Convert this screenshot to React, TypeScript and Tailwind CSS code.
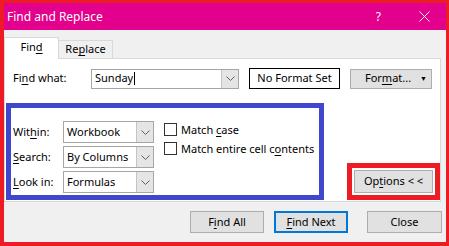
import React from "react";

function Chevron() {
  return (
    <svg width="9" height="5" viewBox="0 0 9 5" className="block">
      <path d="M0.5 0.5 L4.5 4.5 L8.5 0.5" fill="none" stroke="#606060" strokeWidth="1" />
    </svg>
  );
}

function Combo({ value, width, caret }: { value: string; width: string; caret?: boolean }) {
  return (
    <div className={`flex h-full ${width} border border-[#a6a6a6] bg-white`}>
      <div className="flex flex-1 items-center pl-[3px]">
        {value}
        {caret && <span className="ml-px h-[13px] w-px bg-black" />}
      </div>
      <div className="flex w-[17px] items-center justify-center border-l border-[#c4c4c4] bg-[#e5e5e5]">
        <Chevron />
      </div>
    </div>
  );
}

function Check({ children }: { children: React.ReactNode }) {
  return (
    <div className="flex h-[13px] items-center">
      <div className="h-[13px] w-[13px] shrink-0 border border-[#333] bg-white" />
      <span className="ml-[4px] leading-none whitespace-nowrap">{children}</span>
    </div>
  );
}

export default function App() {
  return (
    <div
      className="flex h-[246px] w-[449px] flex-col border-t-[3px] border-r-[3px] border-b-4 border-l-4 border-[#ed1c24] bg-[#f0f0f0] text-[11px] text-black"
      style={{ fontFamily: '"Noto Sans", "Open Sans", sans-serif' }}
    >
      {/* title bar */}
      <div className="flex h-[27px] shrink-0 items-center bg-[#e3008c] pl-[3px] text-white">
        <span className="text-[12px]">Find and Replace</span>
        <span className="ml-auto text-[12px]">?</span>
        <svg width="11" height="11" viewBox="0 0 11 11" className="mr-[16px] ml-[38px]">
          <path d="M0.5 0.5 L10.5 10.5 M10.5 0.5 L0.5 10.5" stroke="white" strokeWidth="1" />
        </svg>
      </div>

      {/* tabs */}
      <div className="mt-[7px] flex h-[21px] items-end">
        <div className="relative z-10 -mb-px flex h-[22px] w-[55px] items-center justify-center border border-b-0 border-[#d9d9d9] bg-white pb-[2px]">
          Fin<u className="underline-offset-2">d</u>
        </div>
        <div className="flex h-[18px] w-[54px] items-center justify-center border-t border-r border-[#d9d9d9] bg-[#f0f0f0]">
          Re<u className="underline-offset-2">p</u>lace
        </div>
      </div>

      {/* panel */}
      <div className="flex h-[144px] w-[437px] flex-col border border-[#d9d9d9] bg-white">
        <div className="mt-[9px] flex h-[21px] items-center pl-[8px]">
          <div className="w-[78px]">
            Fi<u className="underline-offset-2">n</u>d what:
          </div>
          <div className="h-[20px]">
            <Combo value="Sunday" width="w-[148px]" caret />
          </div>
          <div className="ml-[10px] flex h-[21px] w-[91px] items-center justify-center border border-black bg-white">
            No Format Set
          </div>
          <div className="ml-[10px] flex h-[20px] w-[82px] items-center border border-[#adadad] bg-[#e1e1e1]">
            <span className="flex-1 pl-[5px] text-center">
              For<u className="underline-offset-2">m</u>at...
            </span>
            <span className="mr-[4px] text-[7px] leading-none">▼</span>
          </div>
        </div>

        <div className="mt-[14px] flex items-end">
          <div className="ml-px flex h-[97px] w-[318px] border-[5px] border-[#3f48cc] pt-[13px] pl-[2px]">
            <div className="flex flex-col gap-[3px]">
              {[
                ["Wit", "h", "in:", "Workbook"],
                ["", "S", "earch:", "By Columns"],
                ["", "L", "ook in:", "Formulas"],
              ].map(([a, u, b, v]) => (
                <div key={v} className="flex h-[22px] items-center">
                  <div className="w-[50px]">
                    {a}
                    <u className="underline-offset-2">{u}</u>
                    {b}
                  </div>
                  <Combo value={v} width="w-[91px]" />
                </div>
              ))}
            </div>
            <div className="ml-[10px] flex flex-col gap-[6px] pt-[2px]">
              <Check>
                Match <u className="underline-offset-2">c</u>ase
              </Check>
              <Check>
                Match entire cell c<u className="underline-offset-2">o</u>ntents
              </Check>
            </div>
          </div>
          <div className="ml-[23px] h-[37px] w-[93px] border-[5px] border-[#ed1c24] bg-white p-[2px]">
            <div className="flex h-full w-full items-center justify-center border border-[#adadad] bg-[#e1e1e1]">
              Op<u className="underline-offset-2">t</u>ions &lt; &lt;
            </div>
          </div>
        </div>
      </div>

      {/* buttons */}
      <div className="mt-[9px] flex justify-end pr-[4px]">
        <div className="flex h-[22px] w-[74px] items-center justify-center border border-[#adadad] bg-[#e1e1e1]">
          F<u className="underline-offset-2">i</u>nd All
        </div>
        <div className="ml-[10px] flex h-[22px] w-[74px] items-center justify-center border-2 border-[#0078d7] bg-[#e1e1e1]">
          <u className="underline-offset-2">F</u>ind Next
        </div>
        <div className="ml-[19px] flex h-[22px] w-[75px] items-center justify-center border border-[#adadad] bg-[#e1e1e1]">
          Close
        </div>
      </div>
    </div>
  );
}
